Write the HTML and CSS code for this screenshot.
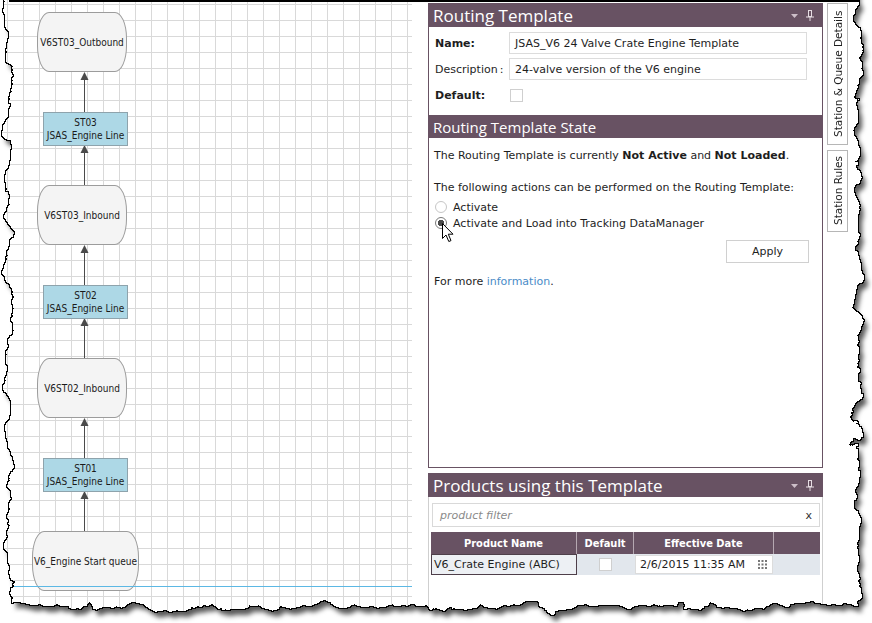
FILE: index.html
```html
<!DOCTYPE html>
<html lang="en">
<head>
<meta charset="utf-8">
<title>Routing Template</title>
<link rel="stylesheet" href="styles.css">
</head>
<body>
<div class="shot">

  <div class="canvas">
    <svg class="links" width="412" height="623" viewBox="0 0 412 623">
      <g stroke="#4a4a4a" stroke-width="1" fill="#4a4a4a">
        <line x1="84.5" y1="112" x2="84.5" y2="78"/><polygon points="84.5,72 80.5,80 88.5,80" stroke="none"/>
        <line x1="84.5" y1="185" x2="84.5" y2="151"/><polygon points="84.5,145 80.5,153 88.5,153" stroke="none"/>
        <line x1="84.5" y1="285" x2="84.5" y2="251"/><polygon points="84.5,245 80.5,253 88.5,253" stroke="none"/>
        <line x1="84.5" y1="358" x2="84.5" y2="324"/><polygon points="84.5,318 80.5,326 88.5,326" stroke="none"/>
        <line x1="84.5" y1="458" x2="84.5" y2="424"/><polygon points="84.5,418 80.5,426 88.5,426" stroke="none"/>
        <line x1="84.5" y1="531" x2="84.5" y2="497"/><polygon points="84.5,491 80.5,499 88.5,499" stroke="none"/>
      </g>
    </svg>
    <div class="node queue" style="top:12px">V6ST03_Outbound</div>
    <div class="node station" style="top:112px"><span>ST03</span><span>JSAS_Engine Line</span></div>
    <div class="node queue" style="top:185px">V6ST03_Inbound</div>
    <div class="node station" style="top:285px"><span>ST02</span><span>JSAS_Engine Line</span></div>
    <div class="node queue" style="top:358px">V6ST02_Inbound</div>
    <div class="node station" style="top:458px"><span>ST01</span><span>JSAS_Engine Line</span></div>
    <div class="node queue start" style="top:531px">V6_Engine Start queue</div>
    <div class="guide"></div>
  </div>

  <div class="panels">
    <section class="panel p1">
      <header class="panel-head">
        <span>Routing Template</span>
        <span class="tools">
          <svg width="7" height="4" viewBox="0 0 7 4"><polygon points="0,0 7,0 3.5,4" fill="#cdbfc9"/></svg>
          <svg width="8" height="11" viewBox="0 0 8 11"><g fill="none" stroke="#e6dde3" stroke-width="1"><rect x="2.5" y="0.5" width="3" height="6"/><line x1="0" y1="7" x2="8" y2="7"/><line x1="4" y1="7" x2="4" y2="11"/></g></svg>
        </span>
      </header>
      <div class="body">
        <div class="form">
          <div class="label strong">Name:</div>
          <div class="field">JSAS_V6 24 Valve Crate Engine Template</div>
          <div class="label">Description<span class="colon">:</span></div>
          <div class="field">24-valve version of the V6 engine</div>
          <div class="label strong">Default:</div>
          <div class="check-cell"><span class="check"></span></div>
        </div>
        <div class="subhead">Routing Template State</div>
        <div class="state">
          <p class="line">The Routing Template is currently <b>Not Active</b> and <b>Not Loaded</b>.</p>
          <p class="line gap">The following actions can be performed on the Routing Template:</p>
          <div class="radios">
            <div class="radio-row"><span class="radio"></span>Activate</div>
            <div class="radio-row"><span class="radio on"></span>Activate and Load into Tracking DataManager</div>
          </div>
          <div class="apply-row"><button class="apply" type="button">Apply</button></div>
          <p class="line more">For more <a href="#">information</a>.</p>
        </div>
      </div>
    </section>

    <section class="panel p2">
      <header class="panel-head">
        <span>Products using this Template</span>
        <span class="tools">
          <svg width="7" height="4" viewBox="0 0 7 4"><polygon points="0,0 7,0 3.5,4" fill="#cdbfc9"/></svg>
          <svg width="8" height="11" viewBox="0 0 8 11"><g fill="none" stroke="#e6dde3" stroke-width="1"><rect x="2.5" y="0.5" width="3" height="6"/><line x1="0" y1="7" x2="8" y2="7"/><line x1="4" y1="7" x2="4" y2="11"/></g></svg>
        </span>
      </header>
      <div class="body">
        <div class="filter"><span class="placeholder">product filter</span><span class="clear">x</span></div>
        <div class="grid">
          <div class="th">Product Name</div>
          <div class="th">Default</div>
          <div class="th">Effective Date</div>
          <div class="th"></div>
          <div class="td name">V6_Crate Engine (ABC)</div>
          <div class="td center"><span class="check"></span></div>
          <div class="td"><div class="date">2/6/2015 11:35 AM
            <svg width="9" height="9" viewBox="0 0 9 9"><g fill="#777"><rect x="0" y="0" width="2" height="2"/><rect x="3.5" y="0" width="2" height="2"/><rect x="7" y="0" width="2" height="2"/><rect x="0" y="3.5" width="2" height="2"/><rect x="3.5" y="3.5" width="2" height="2"/><rect x="7" y="3.5" width="2" height="2"/><rect x="0" y="7" width="2" height="2"/><rect x="3.5" y="7" width="2" height="2"/><rect x="7" y="7" width="2" height="2"/></g></svg>
          </div></div>
          <div class="td"></div>
        </div>
      </div>
    </section>
  </div>

  <div class="tabs">
    <div class="tab tab-details">Station &amp; Queue Details</div>
    <div class="tab tab-rules">Station Rules</div>
  </div>

  <svg class="pointer" width="13" height="20" viewBox="0 0 13 20">
    <path d="M0.5,0.5 L0.5,15.5 L4,12 L6.8,18.5 L9,17.6 L6.3,11.2 L11,11.2 Z" fill="#fff" stroke="#000" stroke-width="1" stroke-linejoin="round"/>
  </svg>

  <svg class="torn" width="872" height="623" viewBox="0 0 872 623">
    <defs>
      <filter id="paper" filterUnits="userSpaceOnUse" x="-20" y="-60" width="912" height="703" color-interpolation-filters="sRGB">
        <feTurbulence type="fractalNoise" baseFrequency="0.035" numOctaves="5" seed="11" result="noise"/>
        <feDisplacementMap in="SourceGraphic" in2="noise" scale="22" xChannelSelector="R" yChannelSelector="G" result="sheet"/>
        <feMorphology in="sheet" operator="dilate" radius="1" result="fat"/>
        <feComposite in="fat" in2="sheet" operator="out" result="edge"/>
        <feOffset in="sheet" dx="4" dy="6" result="moved"/>
        <feGaussianBlur in="moved" stdDeviation="2.6" result="soft"/>
        <feFlood flood-color="#000" flood-opacity="0.65"/>
        <feComposite in2="soft" operator="in" result="shade"/>
        <feComposite in="shade" in2="sheet" operator="out" result="shadeOut"/>
        <feFlood flood-color="#fff"/>
        <feComposite in2="sheet" operator="out" result="outside"/>
        <feMerge>
          <feMergeNode in="outside"/>
          <feMergeNode in="shadeOut"/>
          <feMergeNode in="edge"/>
        </feMerge>
      </filter>
    </defs>
    <rect x="9" y="-40" width="849" height="646" fill="#000" filter="url(#paper)"/>
    <rect x="9" y="0" width="851" height="2" fill="#000"/>
  </svg>
</div>
</body>
</html>
```

FILE: styles.css
```css
body {
  margin: 0;
  background: #fff;
}

.shot {
  position: relative;
  width: 872px;
  height: 623px;
  overflow: hidden;
  display: flex;
  font-family: "DejaVu Sans", sans-serif;
  font-size: 11px;
  color: #1e1e1e;
}

/* ---------- routing diagram ---------- */
.canvas {
  position: relative;
  flex: none;
  width: 412px;
  height: 623px;
  background-color: #fff;
  background-image:
    linear-gradient(to right, #d9d9d9 1px, transparent 1px),
    linear-gradient(to bottom, #d9d9d9 1px, transparent 1px);
  background-size: 16px 16px;
  background-position: 7px 4px;
}

.links {
  position: absolute;
  left: 0;
  top: 0;
}

.node {
  position: absolute;
  box-sizing: border-box;
  display: flex;
  flex-direction: column;
  align-items: center;
  justify-content: center;
  text-align: center;
  font-family: "DejaVu Sans Condensed", "DejaVu Sans", sans-serif;
  font-size: 10px;
  color: #1a1a1a;
  white-space: nowrap;
}

.queue {
  left: 37px;
  width: 90px;
  height: 60px;
  background: #f4f4f4;
  border: 1px solid #9c9c9c;
  border-radius: 12px / 26px;
}

.queue.start {
  left: 32px;
  width: 107px;
}

.station {
  left: 43px;
  width: 85px;
  height: 34px;
  background: #add8e6;
  border: 1px solid #8ea3ac;
  line-height: 13px;
}

.guide {
  position: absolute;
  left: 0;
  right: 0;
  top: 586px;
  height: 1px;
  background: #5cb8e4;
}

/* ---------- docked panels ---------- */
.panels {
  flex: none;
  width: 395px;
  margin-left: 16px;
  padding-top: 3px;
  display: flex;
  flex-direction: column;
}

.panel {
  display: flex;
  flex-direction: column;
}

.panel-head {
  flex: none;
  height: 24px;
  box-sizing: border-box;
  background: #685263;
  color: #fff;
  display: flex;
  align-items: center;
  justify-content: space-between;
  padding: 0 9px 0 5px;
  font-family: "Open Sans", sans-serif;
  font-size: 17px;
}

.tools {
  display: flex;
  align-items: center;
  gap: 8px;
  padding-top: 1px;
}

.p1 {
  height: 465px;
}

.p1 .body {
  flex: 1;
  border: 1px solid #685263;
  border-top: 0;
}

.p2 {
  flex: 1;
  margin-top: 5px;
}

.p2 .body {
  flex: 1;
  border-left: 1px solid #cfcfcf;
  border-right: 1px solid #cfcfcf;
}

.form {
  display: grid;
  grid-template-columns: 74px 298px;
  grid-auto-rows: 22px;
  row-gap: 4px;
  align-items: center;
  padding: 5px 0 0 6px;
}

.label {
  white-space: nowrap;
}

.label.strong {
  font-weight: bold;
}

.colon {
  margin-left: 2px;
}

.field {
  height: 22px;
  box-sizing: border-box;
  border: 1px solid #dcdcdc;
  padding: 0 5px;
  display: flex;
  align-items: center;
  white-space: nowrap;
}

.check-cell {
  display: flex;
  align-items: center;
  padding-left: 1px;
}

.check {
  display: inline-block;
  width: 13px;
  height: 13px;
  box-sizing: border-box;
  border: 1px solid #cfcfcf;
  background: #fff;
}

.subhead {
  margin-top: 9px;
  height: 23px;
  background: #685263;
  color: #fff;
  display: flex;
  align-items: center;
  padding-left: 4px;
  font-family: "Open Sans", sans-serif;
  font-size: 15px;
}

.state {
  padding: 11px 0 0 5px;
}

.line {
  margin: 0;
  line-height: 14px;
  white-space: nowrap;
}

.line.gap {
  margin-top: 18px;
}

.radios {
  margin-top: 4px;
}

.radio-row {
  display: flex;
  align-items: center;
  gap: 6px;
  height: 16px;
}

.radio {
  width: 12px;
  height: 12px;
  margin-left: 1px;
  box-sizing: border-box;
  border: 1px solid #c6c6c6;
  border-radius: 50%;
  background: #fff;
}

.radio.on {
  border-color: #7a7a7a;
  background: radial-gradient(circle, #4a4a4a 0 3px, #fff 3.5px);
}

.apply-row {
  display: flex;
  justify-content: flex-end;
  margin-top: 9px;
  padding-right: 13px;
}

.apply {
  width: 83px;
  height: 23px;
  border: 1px solid #d0d0d0;
  background: #fff;
  font: inherit;
  color: #1e1e1e;
}

.line.more {
  margin-top: 12px;
}

.line.more a {
  color: #4a8cc8;
  text-decoration: none;
}

.filter {
  margin: 6px 2px 0 3px;
  height: 24px;
  box-sizing: border-box;
  border: 1px solid #d9d9d9;
  display: flex;
  align-items: center;
  justify-content: space-between;
  padding: 0 7px 0 7px;
}

.placeholder {
  font-style: italic;
  color: #8a8a8a;
}

.clear {
  color: #333;
}

.grid {
  margin: 5px 2px 0 2px;
  display: grid;
  grid-template-columns: 146px 57px 140px 1fr;
  grid-template-rows: 22px 21px;
}

.th {
  background: #685263;
  color: #fff;
  display: flex;
  align-items: center;
  justify-content: center;
  border-right: 1px solid #b5a8b1;
  font-family: "DejaVu Sans Condensed", "DejaVu Sans", sans-serif;
  font-weight: bold;
}

.th:nth-child(4) {
  border-right: 0;
}

.td {
  background: #e2e7ed;
  display: flex;
  align-items: center;
  white-space: nowrap;
}

.td.name {
  background: #edf0f4;
  border: 1px solid #4e3f4a;
  padding-left: 2px;
}

.td.center {
  justify-content: center;
}

.date {
  flex: 1;
  height: 19px;
  margin: 0 1px;
  box-sizing: border-box;
  border: 1px solid #dcdcdc;
  background: #fff;
  display: flex;
  align-items: center;
  justify-content: space-between;
  padding: 0 5px 0 4px;
}

/* ---------- side tabs ---------- */
.tabs {
  flex: none;
  width: 21px;
  margin-left: 4px;
  padding-top: 3px;
  display: flex;
  flex-direction: column;
  gap: 5px;
}

.tab {
  box-sizing: border-box;
  border: 1px solid #b6b6b6;
  background: #fff;
  writing-mode: vertical-rl;
  transform: rotate(180deg);
  display: flex;
  align-items: center;
  justify-content: center;
  white-space: nowrap;
  font-size: 10.5px;
}

.tab-details {
  height: 142px;
}

.tab-rules {
  height: 82px;
}

/* ---------- overlays ---------- */
.pointer {
  position: absolute;
  left: 442px;
  top: 223px;
}

.torn {
  position: absolute;
  left: 0;
  top: 0;
  pointer-events: none;
}
```
